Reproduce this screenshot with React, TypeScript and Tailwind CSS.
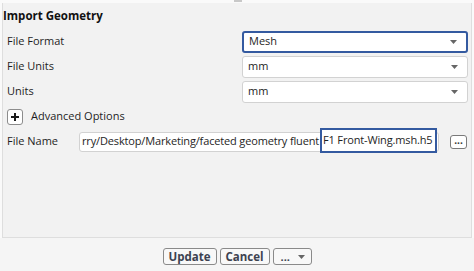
import React from "react";

const font = { fontFamily: '"Open Sans", "DejaVu Sans", sans-serif' };

const Caret = () => (
  <svg width="7" height="4" viewBox="0 0 7 4" className="shrink-0">
    <path d="M0 0 L7 0 L3.5 4 Z" fill="#666" />
  </svg>
);

const Combo = ({ value, active }: { value: string; active?: boolean }) => (
  <div
    className={
      "flex h-[22px] w-[226px] items-center justify-between rounded-[3px] bg-white pl-[5px] pr-[9px] text-[11px] text-[#1e1e1e] " +
      (active ? "border-2 border-[#345aa0]" : "border border-[#d2d2d2]")
    }
  >
    <span>{value}</span>
    <Caret />
  </div>
);

const Row = ({ label, children }: { label: string; children: React.ReactNode }) => (
  <div className="flex h-[25px] items-center">
    <span className="w-[239px] pl-[4px] text-[11px] text-[#1e1e1e]">{label}</span>
    {children}
  </div>
);

export default function App() {
  return (
    <div className="flex h-[271px] w-[474px] flex-col bg-[#fafafa]" style={font}>
      <div className="relative h-[3px]">
        <div className="absolute left-[234px] top-0 h-[2px] w-[8px] bg-[#c8c8c8]" />
      </div>
      <div className="mx-[2px] flex h-[235px] flex-col border border-t-0 border-[#dedede] bg-[#f2f2f2]">
        <div className="flex h-[26px] items-center text-[11.5px] font-bold text-[#111]">
          Import Geometry
        </div>
        <Row label="File Format">
          <Combo value="Mesh" active />
        </Row>
        <Row label="File Units">
          <Combo value="mm" />
        </Row>
        <Row label="Units">
          <Combo value="mm" />
        </Row>
        <div className="flex h-[25px] items-center pl-[4px]">
          <div className="flex h-[16px] w-[16px] items-center justify-center rounded-[3px] border border-[#8c8c8c] bg-white">
            <svg width="10" height="10" viewBox="0 0 10 10">
              <path d="M5 1 V9 M1 5 H9" stroke="#1a1a1a" strokeWidth="2" />
            </svg>
          </div>
          <span className="ml-[8px] text-[11px] text-[#1e1e1e]">Advanced Options</span>
        </div>
        <div className="flex h-[25px] items-center">
          <span className="w-[76px] pl-[4px] text-[11px] text-[#1e1e1e]">File Name</span>
          <div className="relative flex h-[20px] w-[360px] items-center rounded-[3px] border border-[#d2d2d2] bg-white">
            <div className="w-[242px] whitespace-nowrap pl-[2px] text-[11px] tracking-[-0.15px] text-[#1e1e1e]">
              rry/Desktop/Marketing/faceted geometry fluent
            </div>
            <div className="absolute left-[240px] top-[-5px] flex h-[25px] w-[117px] items-center whitespace-nowrap border-2 border-[#345aa0] bg-white pl-[1px] text-[11px] tracking-[-0.15px] text-[#1e1e1e]">
              F1 Front-Wing.msh.h5
            </div>
          </div>
          <div className="ml-[11px] flex h-[14px] w-[17px] items-start justify-center rounded-[3px] border border-[#7a7a7a] bg-white text-[10px] font-bold leading-[9px] text-[#333]">
            ...
          </div>
        </div>
      </div>
      <div className="flex flex-1 items-start justify-center gap-[3px] bg-[#f5f5f5] pt-[10px]">
        <button className="flex h-[17px] w-[54px] items-center justify-center rounded-[3px] border border-[#8a8a8a] bg-[#f8f8f8] text-[11.5px] font-bold text-[#3c4250]">
          Update
        </button>
        <button className="flex h-[17px] w-[50px] items-center justify-center rounded-[3px] border border-[#8a8a8a] bg-[#f8f8f8] text-[11.5px] font-bold text-[#3c4250]">
          Cancel
        </button>
        <button className="flex h-[17px] w-[39px] items-center justify-between rounded-[3px] border border-[#8a8a8a] bg-[#f8f8f8] pl-[7px] pr-[6px] text-[11px] font-bold text-[#3c4250]">
          <span className="leading-[8px]">...</span>
          <Caret />
        </button>
      </div>
    </div>
  );
}
